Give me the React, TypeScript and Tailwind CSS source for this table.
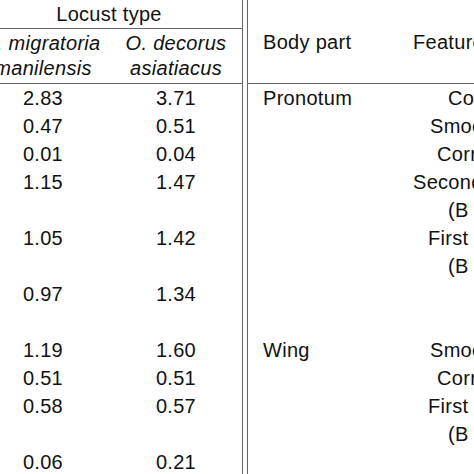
type Row = {
  a: string;
  b: string;
  part: string;
  feature: string;
  pad: string;
};

const rows: Row[] = [
  { a: "2.83", b: "3.71", part: "Pronotum", feature: "Color", pad: "pl-[35px]" },
  { a: "0.47", b: "0.51", part: "", feature: "Smoothness", pad: "pl-[17px]" },
  { a: "0.01", b: "0.04", part: "", feature: "Corrugation", pad: "pl-[24px]" },
  { a: "1.15", b: "1.47", part: "", feature: "Second transverse", pad: "pl-0" },
  { a: "", b: "", part: "", feature: "(B area)", pad: "pl-[35px]" },
  { a: "1.05", b: "1.42", part: "", feature: "First transverse", pad: "pl-[15px]" },
  { a: "", b: "", part: "", feature: "(B area)", pad: "pl-[35px]" },
  { a: "0.97", b: "1.34", part: "", feature: "", pad: "pl-0" },
  { a: "", b: "", part: "", feature: "", pad: "pl-0" },
  { a: "1.19", b: "1.60", part: "Wing", feature: "Smoothness", pad: "pl-[17px]" },
  { a: "0.51", b: "0.51", part: "", feature: "Corrugation", pad: "pl-[24px]" },
  { a: "0.58", b: "0.57", part: "", feature: "First vein", pad: "pl-[15px]" },
  { a: "", b: "", part: "", feature: "(B area)", pad: "pl-[35px]" },
  { a: "0.06", b: "0.21", part: "", feature: "", pad: "pl-0" },
];

export default function App() {
  return (
    <div className="w-[474px] h-[474px] overflow-hidden bg-white text-[#111] text-[20px] tracking-[0.3px] font-['Liberation_Sans',Arial,sans-serif]">
      <div className="flex h-full -ml-[24px]">
        {/* left half: locust type values */}
        <div className="w-[267px] shrink-0 border-r border-[#666] mr-[4px]">
          <div className="h-[29px] leading-[28px] text-center border-b border-[#666]">
            Locust type
          </div>
          <div className="h-[55px] flex items-center border-b border-[#666] italic leading-[25px] text-center">
            <div className="w-[134px]">
              <div className="whitespace-nowrap">L. migratoria</div>
              <div>manilensis</div>
            </div>
            <div className="w-[132px]">
              <div>O. decorus</div>
              <div>asiatiacus</div>
            </div>
          </div>
          {rows.map((r, i) => (
            <div key={i} className="flex h-[28px] leading-[28px] text-center">
              <div className="w-[134px]">{r.a}</div>
              <div className="w-[132px]">{r.b}</div>
            </div>
          ))}
        </div>

        {/* right half: body part / feature */}
        <div className="flex-1 min-w-0 border-l border-[#666]">
          <div className="h-[84px] flex items-center border-b border-[#666] pl-[15px] whitespace-nowrap">
            <div className="w-[150px] shrink-0">Body part</div>
            <div>Features</div>
          </div>
          {rows.map((r, i) => (
            <div key={i} className="flex h-[28px] leading-[28px] pl-[15px] whitespace-nowrap">
              <div className="w-[150px] shrink-0">{r.part}</div>
              <div className={r.pad}>{r.feature}</div>
            </div>
          ))}
        </div>
      </div>
    </div>
  );
}
